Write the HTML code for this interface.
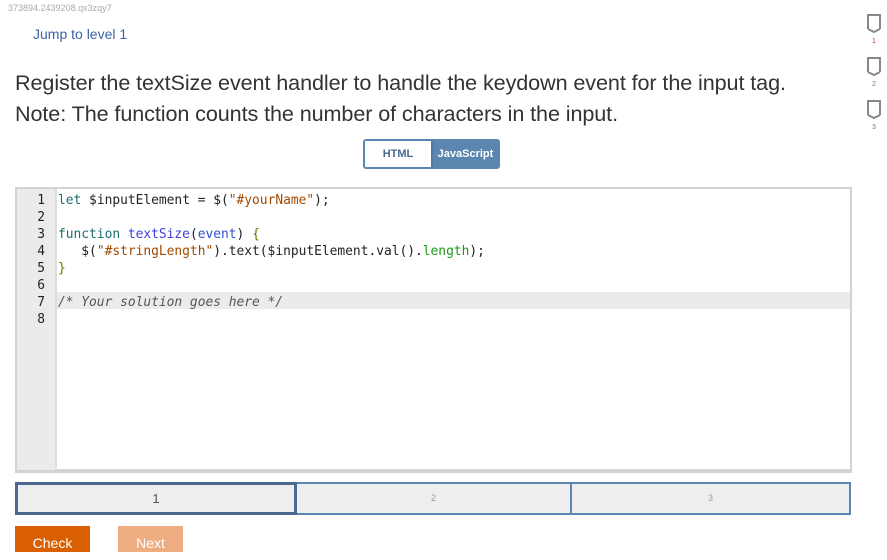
<!DOCTYPE html>
<html><head><style>
body{margin:0;width:887px;height:552px;overflow:hidden;background:#fff;font-family:"Liberation Sans",sans-serif;position:relative}
.a{position:absolute}
.code{font-family:"DejaVu Sans Mono","Liberation Mono",monospace;font-size:12.9px;line-height:17px;white-space:pre}
.icon{position:absolute;left:867px;width:14px;height:14px;border:2px solid #888;border-bottom:none;box-sizing:border-box}
</style></head><body>
<div class="a" style="left:8px;top:3px;font-size:9px;color:#aaa">373894.2439208.qx3zqy7</div>
<div class="a" style="left:33px;top:26px;font-size:14px;color:#3a62a8">Jump to level 1</div>
<div class="a" style="left:15px;top:67px;font-size:21.6px;color:#333;line-height:31px;letter-spacing:-0.1px">Register the textSize event handler to handle the keydown event for the input tag.<br>Note: The function counts the number of characters in the input.</div>
<div class="a" style="left:363px;top:139px;width:137px;height:30px;border:2px solid #5a86b0;border-radius:3px;box-sizing:border-box;background:#5a86b0">
<div class="a" style="left:0;top:0;width:66px;height:26px;background:#fff;border-right:2px solid #4f7aa3;font-size:11px;font-weight:bold;color:#4a6890;text-align:center;line-height:26px">HTML</div>
<div class="a" style="left:68px;top:0;width:65px;height:26px;font-size:11px;font-weight:bold;color:#fff;text-align:center;line-height:26px">JavaScript</div></div>
<div class="a" style="left:15px;top:187px;width:837px;height:286px;border:2px solid #d3d3d3;border-bottom-width:4px;box-sizing:border-box;background:#fff"></div>
<div class="a" style="left:17px;top:189px;width:38px;height:281px;background:#ebebeb;border-right:2px solid #ddd"></div>
<div class="a" style="left:57px;top:292px;width:793px;height:17px;background:#ebebeb"></div>
<div class="a code" style="left:17px;top:192px;width:28px;text-align:right;color:#222">1
2
3
4
5
6
7
8</div>
<div class="a code" style="left:58px;top:192px;color:#222"><span style="color:#1a6e6e">let</span> $inputElement = $(<span style="color:#a14a00">"#yourName"</span>);

<span style="color:#1a6e6e">function</span> <span style="color:#4040e0">textSize</span>(<span style="color:#3050d0">event</span>) <span style="color:#707000">{</span>
   $(<span style="color:#a14a00">"#stringLength"</span>).text($inputElement.val().<span style="color:#1a9a1a">length</span>);
<span style="color:#707000">}</span>

<i style="color:#555">/* Your solution goes here */</i>
</div>
<div class="a" style="left:15px;top:482px;width:836px;height:33px;border:2px solid #5a86b0;box-sizing:border-box;background:#eee"></div>
<div class="a" style="left:15px;top:482px;width:282px;height:33px;border:3px solid #4a6890;box-sizing:border-box;background:#eee;text-align:center;line-height:28px;font-size:13px;color:#555">1</div>
<div class="a" style="left:570px;top:484px;width:2px;height:29px;background:#5a86b0"></div>
<div class="a" style="left:297px;top:484px;width:273px;height:29px;text-align:center;line-height:29px;font-size:9px;color:#999">2</div>
<div class="a" style="left:572px;top:484px;width:277px;height:29px;text-align:center;line-height:29px;font-size:9px;color:#999">3</div>
<div class="a" style="left:15px;top:526px;width:75px;height:26px;background:#d95f00;color:#fff;font-size:14px;text-align:center;line-height:34px">Check</div>
<div class="a" style="left:118px;top:526px;width:65px;height:26px;background:#edad80;color:#fff;font-size:14px;text-align:center;line-height:34px">Next</div>
<svg class="a" style="left:862px;top:10px" width="25" height="130" viewBox="0 0 25 130">
<g fill="none" stroke="#888" stroke-width="2">
<path d="M6 19V5H18V19"/><path d="M6 19l6 3 6-3"/>
<path d="M6 62V48H18V62"/><path d="M6 62l6 3 6-3"/>
<path d="M6 105V91H18V105"/><path d="M6 105l6 3 6-3"/>
</g>
<text x="12" y="33" font-size="7" fill="#c33" text-anchor="middle" font-family="Liberation Sans">1</text>
<text x="12" y="76" font-size="7" fill="#777" text-anchor="middle" font-family="Liberation Sans">2</text>
<text x="12" y="119" font-size="7" fill="#777" text-anchor="middle" font-family="Liberation Sans">3</text>
</svg>
</body></html>
